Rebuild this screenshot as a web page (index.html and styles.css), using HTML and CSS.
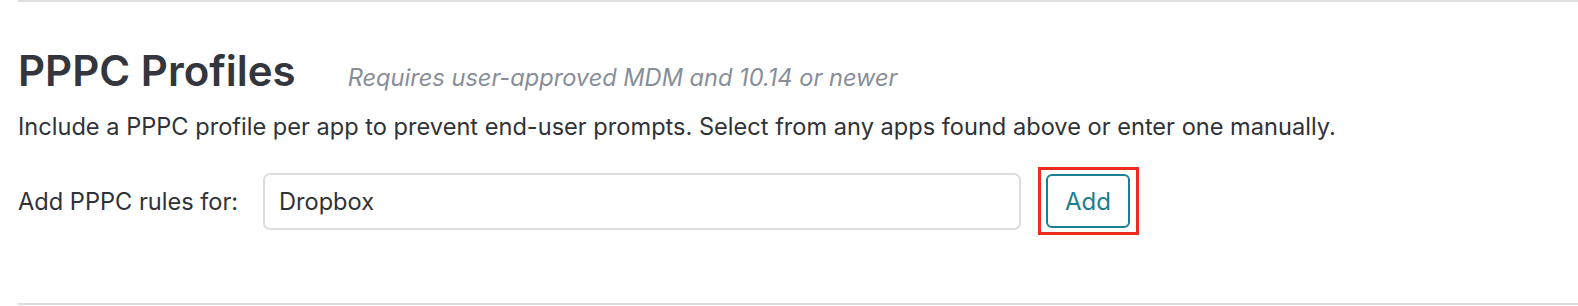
FILE: index.html
```html
<!DOCTYPE html>
<html lang="en">
<head>
  <meta charset="UTF-8">
  <title>PPPC Profiles</title>
  <link rel="stylesheet" href="styles.css">
</head>
<body>
  <section class="section">
    <div class="section-head">
      <h2>PPPC Profiles</h2>
      <span class="note">Requires user-approved MDM and 10.14 or newer</span>
    </div>
    <p class="intro">Include a PPPC profile per app to prevent end-user prompts. Select from any apps found above or enter one manually.</p>
    <div class="rule-row">
      <label for="app-name">Add PPPC rules for:</label>
      <input type="text" id="app-name" class="app-input" value="Dropbox">
      <div class="highlight">
        <button class="btn-add">Add</button>
      </div>
    </div>
  </section>
</body>
</html>
```

FILE: styles.css
```css
body {
  margin: 0;
  padding: 0 0 0 18px;
  font-family: 'Inter', 'Noto Sans', sans-serif;
  color: #343a40;
  background: #fff;
}

.section {
  border-top: 2px solid #dedede;
  border-bottom: 2px solid #dedede;
  height: 305px;
  box-sizing: border-box;
}

.section-head {
  display: flex;
  align-items: baseline;
  gap: 52px;
  margin-top: 44px;
}

h2 {
  margin: 0;
  font-size: 42px;
  font-weight: 600;
  color: #33363d;
  line-height: 50px;
}

.note {
  font-size: 23.6px;
  font-style: italic;
  color: #878e99;
}

.intro {
  margin: 16px 0 0;
  font-size: 23.6px;
  line-height: 30px;
  color: #2f3237;
}

.rule-row {
  display: flex;
  align-items: center;
  margin-top: 25px;
}

.rule-row label {
  flex-shrink: 0;
  font-size: 23.6px;
  color: #2f3237;
  width: 245px;
}

.app-input {
  flex-shrink: 0;
  width: 758px;
  height: 57px;
  box-sizing: border-box;
  border: 2px solid #dcdde0;
  border-radius: 7px;
  padding: 0 14px;
  font-family: inherit;
  font-size: 23.6px;
  color: #2f3237;
}

.highlight {
  flex-shrink: 0;
  margin-left: 17px;
  border: 3px solid #ee2b1f;
  padding: 4px 6px 4px 5px;
}

.btn-add {
  display: block;
  width: 84px;
  height: 54px;
  background: #fff;
  border: 2px solid #1a7f8e;
  border-radius: 6px;
  color: #1a7f8e;
  font-family: inherit;
  font-size: 24px;
}
```
